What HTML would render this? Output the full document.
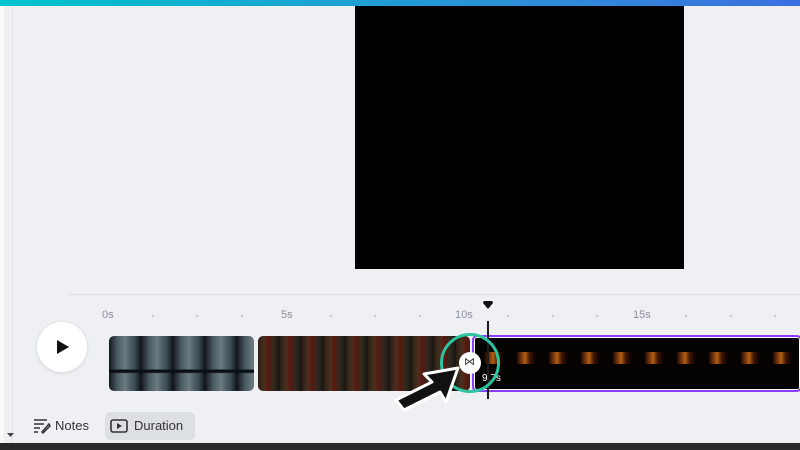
<!DOCTYPE html>
<html><head><style>
body{margin:0;width:800px;height:450px;overflow:hidden;background:#eef0f4;font-family:"Liberation Sans",sans-serif;position:relative}
div{position:absolute;box-sizing:border-box}
.lbl{top:309px;font-size:11px;color:#8a8f99}
.dot{top:315px;width:2px;height:2px;background:#b8bcc4;border-radius:1px}
</style></head><body>
<div style="left:0;top:0;width:800px;height:6px;background:linear-gradient(90deg,#00c4cc,#2f8bd8 70%,#3b6fe0)"></div>
<div style="left:0;top:6px;width:4px;height:437px;background:#fafafa"></div>
<div style="left:12px;top:6px;width:1px;height:437px;background:#e2e4e8"></div>
<div style="left:355px;top:6px;width:329px;height:263px;background:#000"></div>
<div style="left:68px;top:294px;width:732px;height:1px;background:#dcdfe4"></div>
<div class="lbl" style="left:102px">0s</div>
<div class="lbl" style="left:281px">5s</div>
<div class="lbl" style="left:455px">10s</div>
<div class="lbl" style="left:633px">15s</div>
<div class="dot" style="left:152px"></div><div class="dot" style="left:196px"></div><div class="dot" style="left:241px"></div>
<div class="dot" style="left:330px"></div><div class="dot" style="left:374px"></div><div class="dot" style="left:419px"></div>
<div class="dot" style="left:507px"></div><div class="dot" style="left:552px"></div><div class="dot" style="left:596px"></div>
<div class="dot" style="left:685px"></div><div class="dot" style="left:730px"></div><div class="dot" style="left:774px"></div>
<div style="left:37px;top:322px;width:50px;height:50px;border-radius:50%;background:#fff;box-shadow:0 1px 4px rgba(0,0,0,.12)"></div>
<svg style="position:absolute;left:56px;top:339px" width="14" height="16"><path d="M1 1L13 8L1 15Z" fill="#111"/></svg>
<div style="left:109px;top:336px;width:145px;height:55px;border-radius:5px;background:linear-gradient(180deg,transparent 0,transparent 60%,#0a1014 62%,#0a1014 66%,transparent 68%),repeating-linear-gradient(90deg,#10181c 0,#4a5860 8px,#6a7880 16px,#3a4a52 26px,#0e1418 32px);"></div>
<div style="left:258px;top:336px;width:212px;height:55px;border-radius:5px;background:repeating-linear-gradient(90deg,#2a1e16 0,#4a3020 6px,#5a1810 10px,#2e2a20 16px,#181410 22px)"></div>
<div style="left:472px;top:335px;width:330px;height:57px;border:2px solid #8b3dff;border-radius:5px;background:#050202;box-shadow:inset 0 0 0 1px #fff"></div>
<div style="left:476px;top:352px;width:324px;height:12px;background:repeating-linear-gradient(90deg,transparent 0,transparent 8px,#5a2408 12px,#b06010 17px,#3a1404 22px,transparent 28px,transparent 32px)"></div>
<div style="left:482px;top:373px;font-size:10px;color:#fff">9.7s</div>
<div style="left:487px;top:321px;width:2px;height:78px;background:#1b1b1b"></div>
<svg style="position:absolute;left:482px;top:301px" width="12" height="9"><path d="M1 2Q1 0 3 0H9Q11 0 11 2L6 8Z" fill="#111"/></svg>
<div style="left:440px;top:333px;width:60px;height:60px;border:3px solid #2ec4a0;border-radius:50%"></div>
<div style="left:459px;top:352px;width:22px;height:22px;border-radius:50%;background:#fff"></div>
<div style="left:464px;top:355px;font-size:11px;color:#333">⋈</div>
<svg style="position:absolute;left:388px;top:362px" width="80" height="52"><path d="M70 6L36 12L44 20L8 38L16 48L52 30L58 40Z" fill="#111" stroke="#fff" stroke-width="3" stroke-linejoin="round"/></svg>
<svg style="position:absolute;left:33px;top:418px" width="18" height="16"><path d="M1 2H14M1 6H11M1 10H7M1 14H5" stroke="#333" stroke-width="1.6"/><path d="M9 14L16 6L17 8L10 15Z" fill="none" stroke="#333" stroke-width="1.5"/></svg>
<div style="left:55px;top:418px;font-size:13px;color:#333">Notes</div>
<div style="left:105px;top:412px;width:90px;height:28px;border-radius:5px;background:#dcdfe4"></div>
<svg style="position:absolute;left:110px;top:419px" width="18" height="14"><rect x="1" y="1" width="16" height="12" rx="2" fill="none" stroke="#333" stroke-width="1.6"/><path d="M7 4L12 7L7 10Z" fill="#333"/></svg>
<div style="left:134px;top:418px;font-size:13px;color:#333">Duration</div>
<svg style="position:absolute;left:7px;top:432px" width="8" height="6"><path d="M0 1H7L3.5 5Z" fill="#444"/></svg>
<div style="left:0;top:443px;width:800px;height:7px;background:#2a2a2a"></div>
</body></html>
